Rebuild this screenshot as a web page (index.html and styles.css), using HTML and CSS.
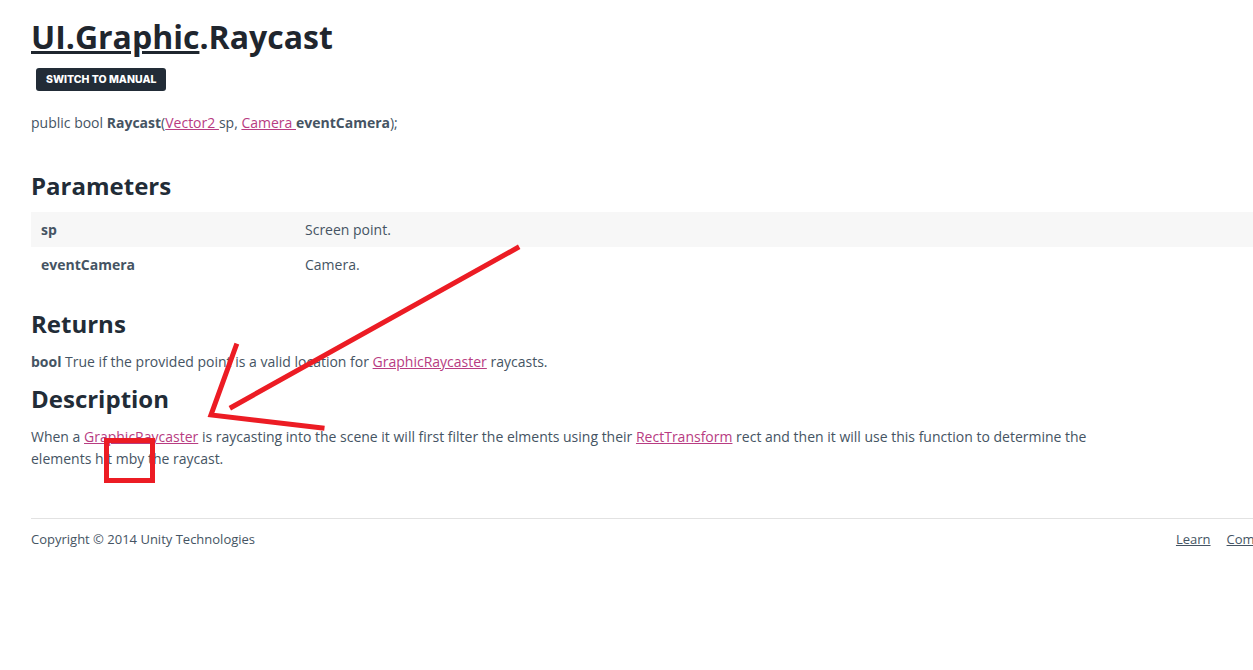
FILE: index.html
```
<!DOCTYPE html>
<html>
<head>
<meta charset="utf-8">
<link rel="stylesheet" href="styles.css">
</head>
<body>
<div class="page">
  <h1 class="title"><a class="title-link" href="#">UI.Graphic</a>.Raycast</h1>
  <div class="switch">SWITCH TO MANUAL</div>
  <p class="sig">public bool <b>Raycast</b>(<a href="#">Vector2 </a>sp, <a href="#">Camera </a><b>eventCamera</b>);</p>

  <h2 class="h-params">Parameters</h2>
  <table class="params">
    <tr class="odd"><td class="name">sp</td><td class="desc">Screen point.</td></tr>
    <tr><td class="name">eventCamera</td><td class="desc">Camera.</td></tr>
  </table>

  <h2 class="h-returns">Returns</h2>
  <p class="ret"><b>bool</b> True if the provided point is a valid location for <a href="#">GraphicRaycaster</a> raycasts.</p>

  <h2 class="h-desc">Description</h2>
  <p class="description">When a <a href="#">GraphicRaycaster</a> is raycasting into the scene it will first filter the elments using their <a href="#">RectTransform</a> rect and then it will use this function to determine the elements hit mby the raycast.</p>

  <div class="footer">
    <span class="copy">Copyright © 2014 Unity Technologies</span>
    <span class="links"><a href="#">Learn</a><a href="#">Community</a></span>
  </div>
</div>
<svg class="marks" width="1253" height="670" viewBox="0 0 1253 670">
  <g stroke="#ec1c24" stroke-width="5" fill="none" stroke-linecap="square">
    <line x1="517" y1="248" x2="232" y2="407"/>
    <polyline points="236,346 211,415 322,428"/>
    <rect x="106.5" y="440.5" width="46" height="40"/>
  </g>
</svg>
</body>
</html>
```
FILE: styles.css
```
html, body {
  margin: 0;
  padding: 0;
  background: #fff;
  overflow: hidden;
}
body {
  font-family: "Open Sans", "Liberation Sans", sans-serif;
  font-size: 14px;
  color: #455463;
  position: relative;
}
.page {
  width: 1266px;
  padding: 17px 0 40px 31px;
}
a {
  color: #b83c82;
  text-decoration: underline;
}
b {
  font-weight: 700;
}
.title {
  margin: 0;
  font-size: 32px;
  line-height: 40px;
  font-weight: 700;
  color: #1f262e;
}
.title-link {
  color: #1f262e;
}
.switch {
  display: inline-block;
  margin: 11px 0 0 5px;
  height: 23px;
  line-height: 23px;
  padding: 0 10px;
  background: #222c37;
  color: #fff;
  border-radius: 3px;
  font-family: Inter, "Liberation Sans", sans-serif;
  font-weight: 800;
  font-size: 10.5px;
}
.sig {
  margin: 21px 0 0;
  line-height: 22px;
}
h2 {
  margin: 0;
  font-size: 24px;
  line-height: 30px;
  font-weight: 700;
  color: #222c37;
}
.h-params { margin-top: 37px; }
.params {
  margin-top: 11px;
  width: 100%;
  border-collapse: collapse;
}
.params td {
  height: 35px;
  padding: 0 10px;
  line-height: 22px;
  vertical-align: middle;
}
.params tr.odd td {
  background: #f7f7f7;
}
.params td.name {
  width: 254px;
  font-weight: 700;
}
.params td.desc {
  padding-left: 0;
}
.h-returns { margin-top: 27px; }
.ret {
  margin: 12px 0 0;
  line-height: 22px;
}
.h-desc { margin-top: 11px; }
.description {
  margin: 12px 0 0;
  line-height: 22px;
  max-width: 1080px;
}
.footer {
  margin-top: 48px;
  border-top: 1px solid #e2e2e2;
  padding-top: 9px;
  display: flex;
  justify-content: space-between;
  font-size: 13px;
  line-height: 22px;
}
.links {
  display: flex;
  gap: 16px;
}
.links a {
  color: #455463;
}
.marks {
  position: absolute;
  left: 0;
  top: 0;
  pointer-events: none;
}
```
